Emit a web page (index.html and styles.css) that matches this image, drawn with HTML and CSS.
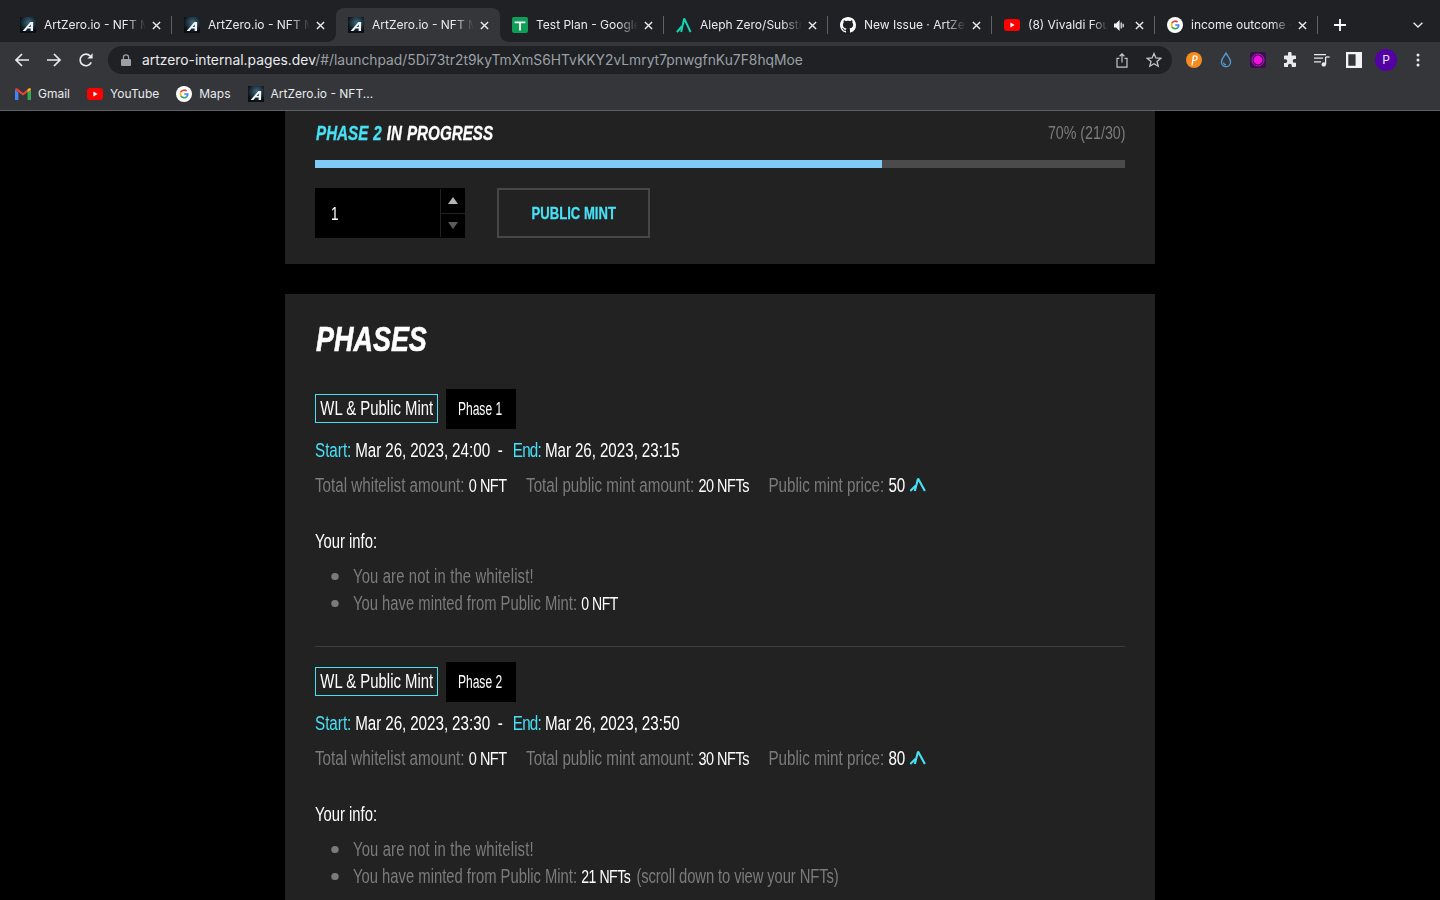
FILE: index.html
```html
<!DOCTYPE html>
<html lang="en">
<head>
    <meta charset="UTF-8">
    <title>ArtZero.io - NFT Marketplace</title>
    <link rel="stylesheet" href="styles.css">
</head>
<body>
    <svg class="defs" width="0" height="0">
        <defs>
            <radialGradient id="azGlow" cx="0.55" cy="0.35" r="0.6">
                <stop offset="0" stop-color="#3f6a80"/>
                <stop offset="1" stop-color="#0a0f14"/>
            </radialGradient>
        </defs>
        <symbol id="az" viewBox="0 0 16 16">
            <rect width="16" height="16" fill="url(#azGlow)"/>
            <path d="M2.6 14 L10.4 5 H13.2 L13 14 H10.6 L10.7 11.6 H7.4 L5.6 14Z M8.6 10 H10.8 L10.9 7.4Z" fill="#f2f5f7" fill-rule="evenodd"/>
        </symbol>
        <symbol id="close" viewBox="0 0 10 10">
            <path d="M1 1 L9 9 M9 1 L1 9" stroke="#e8eaed" stroke-width="1.6" fill="none"/>
        </symbol>
        <symbol id="google" viewBox="0 0 16 16">
            <circle cx="8" cy="8" r="8" fill="#fff"/>
            <path d="M4.9 6.2A3.7 3.7 0 0 1 10.6 5" fill="none" stroke="#ea4335" stroke-width="1.7"/>
            <path d="M4.9 6.2A3.7 3.7 0 0 0 4.9 9.8" fill="none" stroke="#fbbc05" stroke-width="1.7"/>
            <path d="M4.9 9.8A3.7 3.7 0 0 0 10.8 10.6" fill="none" stroke="#34a853" stroke-width="1.7"/>
            <path d="M10.8 10.6A3.7 3.7 0 0 0 11.7 8H8.2" fill="none" stroke="#4285f4" stroke-width="1.7"/>
        </symbol>
        <symbol id="youtube" viewBox="0 0 16 12">
            <rect width="16" height="12" rx="3" fill="#f00"/>
            <path d="M6.4 3.6 L10.6 6 L6.4 8.4Z" fill="#fff"/>
        </symbol>
        <symbol id="aleph" viewBox="0 0 18 16" preserveAspectRatio="none">
            <path d="M1 15 L6.6 9.4 M9.2 1.5 L16.4 15 M9.2 1.5 L5.8 15" fill="none" stroke="currentColor" stroke-width="2.2"/>
        </symbol>
    </svg>

    <header class="browser">
        <div class="tabstrip">
            <div class="tab">
                <svg class="favicon"><use href="#az"/></svg>
                <span class="tab-title">ArtZero.io - NFT Marketplace</span>
                <svg class="tab-close"><use href="#close"/></svg>
            </div>
            <div class="tab before-active">
                <svg class="favicon"><use href="#az"/></svg>
                <span class="tab-title">ArtZero.io - NFT Marketplace</span>
                <svg class="tab-close"><use href="#close"/></svg>
            </div>
            <div class="tab active">
                <svg class="favicon"><use href="#az"/></svg>
                <span class="tab-title">ArtZero.io - NFT Marketplace</span>
                <svg class="tab-close"><use href="#close"/></svg>
            </div>
            <div class="tab">
                <svg class="favicon" viewBox="0 0 16 16">
                    <rect width="16" height="16" rx="2" fill="#0f9d58"/>
                    <path d="M2.6 4.4h10.8v1.8H2.6z M7.1 4.4h1.8v9H7.1z" fill="#fff"/>
                </svg>
                <span class="tab-title">Test Plan - Google Sheets</span>
                <svg class="tab-close"><use href="#close"/></svg>
            </div>
            <div class="tab">
                <svg class="favicon aleph-tab"><use href="#aleph"/></svg>
                <span class="tab-title">Aleph Zero/Substrate Portal</span>
                <svg class="tab-close"><use href="#close"/></svg>
            </div>
            <div class="tab">
                <svg class="favicon" viewBox="0 0 16 16">
                    <path fill="#fff" d="M8 0C3.58 0 0 3.58 0 8c0 3.54 2.29 6.53 5.47 7.59.4.07.55-.17.55-.38 0-.19-.01-.82-.01-1.49-2.01.37-2.53-.49-2.69-.94-.09-.23-.48-.94-.82-1.13-.28-.15-.68-.52-.01-.53.63-.01 1.08.58 1.23.82.72 1.21 1.87.87 2.33.66.07-.52.28-.87.51-1.07-1.78-.2-3.64-.89-3.64-3.95 0-.87.31-1.59.82-2.15-.08-.2-.36-1.02.08-2.12 0 0 .67-.21 2.2.82.64-.18 1.32-.27 2-.27s1.36.09 2 .27c1.53-1.04 2.2-.82 2.2-.82.44 1.1.16 1.92.08 2.12.51.56.82 1.27.82 2.15 0 3.07-1.87 3.75-3.65 3.95.29.25.54.73.54 1.48 0 1.07-.01 1.93-.01 2.2 0 .21.15.46.55.38A8.01 8.01 0 0 0 16 8c0-4.42-3.58-8-8-8z"/>
                </svg>
                <span class="tab-title">New Issue · ArtZero-io</span>
                <svg class="tab-close"><use href="#close"/></svg>
            </div>
            <div class="tab narrow">
                <svg class="favicon"><use href="#youtube"/></svg>
                <span class="tab-title">(8) Vivaldi Four Seasons</span>
                <svg class="tab-sound" viewBox="0 0 10 11">
                    <path d="M0 3.6h2L5.6 0v11L2 7.4H0z" fill="#f1f3f4"/>
                    <path d="M7.2 2.6v5.8 M9.2 3.8v3.4" stroke="#f1f3f4" stroke-width="1.2"/>
                </svg>
                <svg class="tab-close"><use href="#close"/></svg>
            </div>
            <div class="tab narrow">
                <svg class="favicon"><use href="#google"/></svg>
                <span class="tab-title">income outcome - Google</span>
                <svg class="tab-close"><use href="#close"/></svg>
            </div>
            <svg class="new-tab" viewBox="0 0 12 12"><path d="M6 0v12 M0 6h12" stroke="#fff" stroke-width="1.8"/></svg>
            <svg class="tab-menu" viewBox="0 0 10 6"><path d="M.6.8 L5 5 L9.4.8" stroke="#e8eaed" stroke-width="1.4" fill="none"/></svg>
        </div>

        <div class="toolbar">
            <svg class="nav-icon" viewBox="0 0 16 16"><path d="M15 8H2 M8 2 L2 8 L8 14" stroke="#e8eaed" stroke-width="1.7" fill="none"/></svg>
            <svg class="nav-icon" viewBox="0 0 16 16"><path d="M1 8H14 M8 2 L14 8 L8 14" stroke="#e8eaed" stroke-width="1.7" fill="none"/></svg>
            <svg class="nav-icon" viewBox="0 0 16 16"><path d="M13.2 10.4A5.8 5.8 0 1 1 12.2 4" stroke="#e8eaed" stroke-width="1.7" fill="none"/><path d="M9.4 6.4H14.6V1.2Z" fill="#e8eaed"/></svg>
            <div class="omnibox">
                <svg class="lock" viewBox="0 0 10 12"><path d="M2.4 5V3.4a2.6 2.6 0 0 1 5.2 0V5" stroke="#9aa0a6" stroke-width="1.2" fill="none"/><rect y="5" width="10" height="7" rx="1" fill="#9aa0a6"/></svg>
                <span class="url"><b>artzero-internal.pages.dev</b>/#/launchpad/5Di73tr2t9kyTmXmS6HTvKKY2vLmryt7pnwgfnKu7F8hqMoe</span>
                <svg class="omni-icon share" viewBox="0 0 12 15"><path d="M3.4 5.4H1v8.8h10V5.4H8.6 M6 9.6V1 M3.6 3.2 L6 .9 L8.4 3.2" stroke="#c4c7c9" stroke-width="1.2" fill="none"/></svg>
                <svg class="omni-icon star" viewBox="0 0 16 16"><path d="M8 1.6 L9.9 6 L14.7 6.4 L11 9.5 L12.2 14.2 L8 11.7 L3.8 14.2 L5 9.5 L1.3 6.4 L6.1 6Z" stroke="#c4c7c9" stroke-width="1.3" fill="none"/></svg>
            </div>
            <div class="extensions">
                <svg class="ext" viewBox="0 0 16 16"><circle cx="8" cy="8" r="8" fill="#f68b1f"/><path d="M6 13.4 L7.4 4.2 C10.8 3 12 6 10.4 7.6 C9.4 8.6 8 8.6 6.8 8.2" stroke="#fff" stroke-width="1.3" fill="none"/></svg>
                <svg class="ext" viewBox="0 0 16 16"><path d="M8 1.2 C9.5 4 12.6 6.4 12.6 10 A4.6 4.6 0 0 1 3.4 10 C3.4 6.4 6.5 4 8 1.2Z" stroke="#4f9bd4" stroke-width="1.4" fill="none"/><path d="M5.6 10.4 A2.4 2.4 0 0 0 8 12.8" stroke="#4f9bd4" stroke-width="1.2" fill="none"/></svg>
                <svg class="ext" viewBox="0 0 16 16"><rect width="16" height="16" rx="2" fill="#3a0f4e"/><circle cx="8" cy="8" r="6" fill="none" stroke="#e010d0" stroke-width=".9"/><circle cx="8" cy="8" r="4.4" fill="#f010e0"/></svg>
                <svg class="ext" viewBox="0 0 16 16"><path d="M6 1.6a1.8 1.8 0 0 1 3.6 0V3.4h3.6a.8.8 0 0 1 .8.8V7H12.6a1.9 1.9 0 0 0 0 3.8H14v3.4a.8.8 0 0 1-.8.8H9.8v-1.4a1.9 1.9 0 0 0-3.8 0V15H2.8a.8.8 0 0 1-.8-.8V11h1.4a1.9 1.9 0 0 0 0-3.8H2V4.2a.8.8 0 0 1 .8-.8H6Z" fill="#e8eaed"/></svg>
                <svg class="ext" viewBox="0 0 16 16"><path d="M0 2.6h12 M0 6.2h9 M0 9.8h7" stroke="#e8eaed" stroke-width="1.3"/><path d="M11.6 5v7.4" stroke="#e8eaed" stroke-width="1.3"/><path d="M11.6 5h4" stroke="#e8eaed" stroke-width="1.3"/><circle cx="9.8" cy="12.4" r="2.2" fill="#e8eaed"/></svg>
                <svg class="ext" viewBox="0 0 14 14"><path d="M0 0H14V14H0Z M2 2V12H8.4V2Z" fill="#f1f3f4" fill-rule="evenodd"/></svg>
                <span class="avatar">P</span>
                <svg class="ext dots" viewBox="0 0 4 14"><circle cx="2" cy="2" r="1.5" fill="#e8eaed"/><circle cx="2" cy="7" r="1.5" fill="#e8eaed"/><circle cx="2" cy="12" r="1.5" fill="#e8eaed"/></svg>
            </div>
        </div>

        <div class="bookmarks">
            <div class="bookmark">
                <svg class="bm-icon" viewBox="0 0 16 12">
                    <path d="M0 1.4 V12 H3.4 V4.6Z" fill="#4285f4"/>
                    <path d="M16 1.4 V12 H12.6 V4.6Z" fill="#34a853"/>
                    <path d="M0 1.4 Q.6 -.4 2.4 .6 L8 5 L13.6 .6 Q15.4 -.4 16 1.4 L8 7.6Z" fill="#ea4335"/>
                    <path d="M12.6 4.6 L16 1.4 Q15.4 -.4 13.6 .6 L12.6 1.4Z" fill="#fbbc05"/>
                </svg>
                <span>Gmail</span>
            </div>
            <div class="bookmark">
                <svg class="bm-icon"><use href="#youtube"/></svg>
                <span>YouTube</span>
            </div>
            <div class="bookmark">
                <svg class="bm-icon round"><use href="#google"/></svg>
                <span>Maps</span>
            </div>
            <div class="bookmark">
                <svg class="bm-icon round"><use href="#az"/></svg>
                <span>ArtZero.io - NFT...</span>
            </div>
        </div>
    </header>

    <main class="page">
        <section class="panel mint-panel">
            <div class="progress-head">
                <h3 class="progress-title"><em>PHASE 2</em> IN PROGRESS</h3>
                <span class="progress-count">70% (21/30)</span>
            </div>
            <div class="progress-track"><div class="progress-fill" style="width: 70%"></div></div>
            <div class="mint-row">
                <div class="qty">
                    <span class="qty-value">1</span>
                    <div class="qty-stepper">
                        <div class="step"><i class="arrow up"></i></div>
                        <div class="step"><i class="arrow down"></i></div>
                    </div>
                </div>
                <button class="mint-btn" type="button"><span>PUBLIC MINT</span></button>
            </div>
        </section>

        <section class="panel phases-panel">
            <h2 class="phases-title">PHASES</h2>

            <div class="phase">
                <div class="phase-tags">
                    <div class="tag"><span>WL &amp; Public Mint</span></div>
                    <div class="phase-name"><span>Phase 1</span></div>
                </div>
                <p class="dates"><em>Start:</em> Mar 26, 2023, 24:00 &nbsp;-&nbsp; <em class="end">End:</em> Mar 26, 2023, 23:15</p>
                <div class="amounts">
                    <span>Total whitelist amount: <b>0 NFT</b></span>
                    <span>Total public mint amount: <b>20 NFTs</b></span>
                    <span>Public mint price: <b class="price">50</b> <svg class="azero"><use href="#aleph"/></svg></span>
                </div>
                <p class="info-title">Your info:</p>
                <ul class="info-list">
                    <li>You are not in the whitelist!</li>
                    <li>You have minted from Public Mint: <b>0 NFT</b></li>
                </ul>
            </div>

            <div class="phase">
                <div class="phase-tags">
                    <div class="tag"><span>WL &amp; Public Mint</span></div>
                    <div class="phase-name"><span>Phase 2</span></div>
                </div>
                <p class="dates"><em>Start:</em> Mar 26, 2023, 23:30 &nbsp;-&nbsp; <em class="end">End:</em> Mar 26, 2023, 23:50</p>
                <div class="amounts">
                    <span>Total whitelist amount: <b>0 NFT</b></span>
                    <span>Total public mint amount: <b>30 NFTs</b></span>
                    <span>Public mint price: <b class="price">80</b> <svg class="azero"><use href="#aleph"/></svg></span>
                </div>
                <p class="info-title">Your info:</p>
                <ul class="info-list">
                    <li>You are not in the whitelist!</li>
                    <li>You have minted from Public Mint: <b>21 NFTs</b> <span class="hint">(scroll down to view your NFTs)</span></li>
                </ul>
            </div>
        </section>
    </main>
</body>
</html>
```

FILE: styles.css
```css
/* Global styles */
html, body {
    margin: 0;
    padding: 0;
    height: 100%;
    overflow: hidden;
}

body {
    display: flex;
    flex-direction: column;
    background: #000;
    font-family: Inter, 'Liberation Sans', sans-serif;
}

.defs {
    position: absolute;
}

/* Browser chrome */
.browser {
    flex: none;
    height: 111px;
    box-sizing: border-box;
    background: #35363a;
    border-bottom: 1px solid #5f6064;
}

.tabstrip {
    display: flex;
    align-items: center;
    height: 42px;
    padding-left: 8px;
    background: #202124;
}

.tab {
    position: relative;
    display: flex;
    align-items: center;
    flex: none;
    width: 164px;
    height: 34px;
    margin-top: 8px;
    padding: 0 11px 0 12px;
    box-sizing: border-box;
    color: #e8eaed;
    font-size: 12px;
}

.tab.narrow {
    width: 163px;
}

.tab::after {
    content: '';
    position: absolute;
    right: 0;
    top: 8px;
    width: 1px;
    height: 18px;
    background: #5f6368;
}

.tab.before-active::after {
    display: none;
}

.tab.active {
    background: #35363a;
    border-radius: 8px 8px 0 0;
}

/* the little flares at the foot of the selected tab */
.tab.active::before,
.tab.active::after {
    content: '';
    position: absolute;
    top: auto;
    bottom: 0;
    width: 8px;
    height: 8px;
    background: radial-gradient(circle at 0 0, transparent 7.5px, #35363a 8px);
}

.tab.active::before {
    left: -8px;
}

.tab.active::after {
    right: -8px;
    background: radial-gradient(circle at 100% 0, transparent 7.5px, #35363a 8px);
}

.favicon {
    flex: none;
    width: 16px;
    height: 16px;
    margin-right: 8px;
}

.aleph-tab {
    color: #10d8b4;
}

.tab-title {
    flex: 1;
    min-width: 0;
    padding-bottom: 2px;
    overflow: hidden;
    white-space: nowrap;
    -webkit-mask-image: linear-gradient(90deg, #000 80%, transparent 100%);
    mask-image: linear-gradient(90deg, #000 80%, transparent 100%);
}

.tab-close {
    flex: none;
    width: 9px;
    height: 9px;
    margin-left: 6px;
}

.tab-sound {
    flex: none;
    width: 10px;
    height: 11px;
    margin-left: 6px;
    margin-right: 5px;
}

.new-tab {
    width: 12px;
    height: 12px;
    margin: 8px 0 0 16px;
}

.tab-menu {
    width: 10px;
    height: 6px;
    margin: 8px 17px 0 auto;
}

/* Toolbar */
.toolbar {
    display: flex;
    align-items: center;
    height: 36px;
    padding-left: 14px;
}

.nav-icon {
    width: 16px;
    height: 16px;
    margin-right: 16px;
}

.omnibox {
    display: flex;
    align-items: center;
    width: 1064px;
    height: 28px;
    margin-left: -2px;
    padding: 0 10px 0 13px;
    box-sizing: border-box;
    background: #202124;
    border-radius: 14px;
}

.lock {
    width: 10px;
    height: 12px;
    margin-right: 11px;
}

.url {
    flex: 1;
    padding-bottom: 1px;
    color: #9aa0a6;
    font-size: 13.85px;
    white-space: nowrap;
}

.url b {
    color: #e8eaed;
    font-weight: 400;
}

.omni-icon.share {
    width: 12px;
    height: 15px;
    margin-right: 18px;
}

.omni-icon.star {
    width: 16px;
    height: 16px;
}

.extensions {
    display: flex;
    align-items: center;
    margin-left: 14px;
    gap: 16px;
}

.ext {
    width: 16px;
    height: 16px;
}

.ext.dots {
    width: 4px;
    height: 14px;
    margin-left: 6px;
}

.avatar {
    width: 22px;
    height: 22px;
    margin: 0 -3px;
    border-radius: 50%;
    background: #5300a5;
    color: #e8eaed;
    font-size: 12px;
    line-height: 22px;
    text-align: center;
}

/* Bookmarks bar */
.bookmarks {
    display: flex;
    align-items: center;
    height: 32px;
    padding-left: 15px;
    gap: 17px;
}

.bookmark {
    display: flex;
    align-items: center;
    color: #e8eaed;
    font-size: 12px;
}

.bookmark span {
    padding-bottom: 2px;
}

.bm-icon {
    width: 16px;
    height: 12px;
    margin-right: 7px;
}

.bm-icon.round {
    height: 16px;
}

/* Page. No condensed font is installed, so the text lines are squeezed
   with scaleX and their boxes made wider by the same factor. */
.page {
    flex: 1;
    min-height: 0;
    overflow: hidden;
    display: flex;
    flex-direction: column;
    align-items: center;
    gap: 30px;
    color: #fff;
    font-family: 'Liberation Sans', Arial, sans-serif;
}

.panel {
    flex: none;
    width: 870px;
    box-sizing: border-box;
    padding: 0 30px;
    background: #222;
}

/* Mint panel */
.mint-panel {
    height: 153px;
}

.progress-head {
    display: flex;
    align-items: center;
    justify-content: space-between;
    height: 22px;
    padding-top: 11px;
}

.progress-title {
    margin: 0 0 0 1px;
    font-size: 20px;
    font-style: italic;
    font-weight: 700;
    word-spacing: 1px;
    white-space: nowrap;
    transform: scaleX(.76);
    transform-origin: 0 50%;
    -webkit-text-stroke: .3px currentColor;
}

.progress-title em {
    color: #48e0f5;
}

.progress-count {
    margin-right: -1px;
    color: #7b7b7b;
    font-size: 19px;
    transform: scaleX(.75);
    transform-origin: 100% 50%;
}

.progress-track {
    height: 8px;
    margin-top: 16px;
    background: #4b4b4b;
}

.progress-fill {
    height: 100%;
    background: #7fcbf8;
}

.mint-row {
    display: flex;
    gap: 32px;
    margin-top: 20px;
}

.qty {
    display: flex;
    align-items: center;
    justify-content: space-between;
    width: 150px;
    height: 50px;
    box-sizing: border-box;
    padding-left: 16px;
    background: #000;
    font-size: 18px;
}

.qty-value {
    padding-top: 2px;
    transform: scaleX(.75);
    transform-origin: 0 50%;
}

.qty-stepper {
    display: flex;
    flex-direction: column;
    width: 24px;
    height: 48px;
    border-left: 1px solid #222;
}

.step {
    flex: 1;
    display: flex;
    align-items: center;
    justify-content: center;
}

.step:first-child {
    border-bottom: 1px solid #222;
}

.arrow {
    width: 0;
    height: 0;
    border-left: 5px solid transparent;
    border-right: 5px solid transparent;
}

.arrow.up {
    border-bottom: 7px solid #b4b4b4;
}

.arrow.down {
    border-top: 7px solid #5a5a5a;
}

.mint-btn {
    width: 153px;
    height: 50px;
    padding: 2px 0 0;
    background: transparent;
    border: 2px solid #474747;
    color: #48e0f5;
    font-family: inherit;
    font-size: 17px;
    font-weight: 700;
}

.mint-btn span {
    display: inline-block;
    transform: scaleX(.77);
    white-space: nowrap;
    -webkit-text-stroke: .3px currentColor;
}

/* Phases panel */
.phases-title {
    margin: 0 0 0 1px;
    padding-top: 24px;
    font-size: 35px;
    line-height: 42px;
    font-style: italic;
    font-weight: 700;
    transform: scaleX(.77);
    transform-origin: 0 50%;
    -webkit-text-stroke: .6px currentColor;
}

.phase {
    padding: 29px 0 29px;
}

.phase + .phase {
    padding-top: 15px;
    border-top: 1px solid #3c3c3c;
}

.phase-tags {
    display: flex;
    align-items: center;
    gap: 8px;
    height: 40px;
}

.tag {
    display: flex;
    align-items: center;
    justify-content: center;
    width: 123px;
    height: 29px;
    margin-top: -1px;
    box-sizing: border-box;
    border: 1px solid #48e0f5;
    font-size: 20px;
    white-space: nowrap;
}

.tag span {
    flex: none;
    transform: scaleX(.745);
}

.phase-name {
    display: flex;
    align-items: center;
    justify-content: center;
    width: 69.5px;
    height: 40px;
    background: #000;
    font-size: 18px;
    white-space: nowrap;
}

.phase-name span {
    flex: none;
    margin-right: 1px;
    transform: scaleX(.67);
}

.dates,
.amounts,
.info-title,
.info-list {
    width: calc(100% / var(--sx));
    transform: scaleX(var(--sx));
    transform-origin: 0 0;
    white-space: nowrap;
    font-size: 20px;
}

.dates {
    --sx: .76;
    margin: 6px 0 0;
    line-height: 30px;
    word-spacing: -.5px;
}

.dates em {
    color: #48e0f5;
    font-style: normal;
}

.dates .end {
    margin-left: 3px;
    letter-spacing: -1px;
}

.amounts {
    --sx: .76;
    display: flex;
    gap: 25.6px;
    margin-top: 5px;
    color: #7b7b7b;
    line-height: 30px;
}

.amounts b,
.info-list b {
    color: #fff;
    font-size: 19px;
    font-weight: 400;
    letter-spacing: -.6px;
}

.amounts b.price {
    font-size: 20px;
    letter-spacing: 0;
}

.azero {
    width: 22.5px;
    height: 15px;
    color: #48e0f5;
    vertical-align: 0;
}

.info-title {
    --sx: .74;
    margin: 25px 0 0;
    line-height: 30px;
}

.info-list {
    --sx: .74;
    margin: 7px 0 0;
    padding: 0 0 0 51.4px;
    box-sizing: border-box;
    list-style: none;
    color: #7b7b7b;
    line-height: 27px;
}

.info-list li:first-child {
    letter-spacing: .2px;
}

.hint {
    margin-left: 2.5px;
    letter-spacing: -.15px;
}

/* bullet is drawn wider to come out round after the squeeze */
.info-list li::before {
    content: '';
    display: inline-block;
    width: 9.5px;
    height: 7px;
    margin: 0 19.5px 0 -29px;
    border-radius: 50%;
    background: #7b7b7b;
    vertical-align: 3px;
}
```
